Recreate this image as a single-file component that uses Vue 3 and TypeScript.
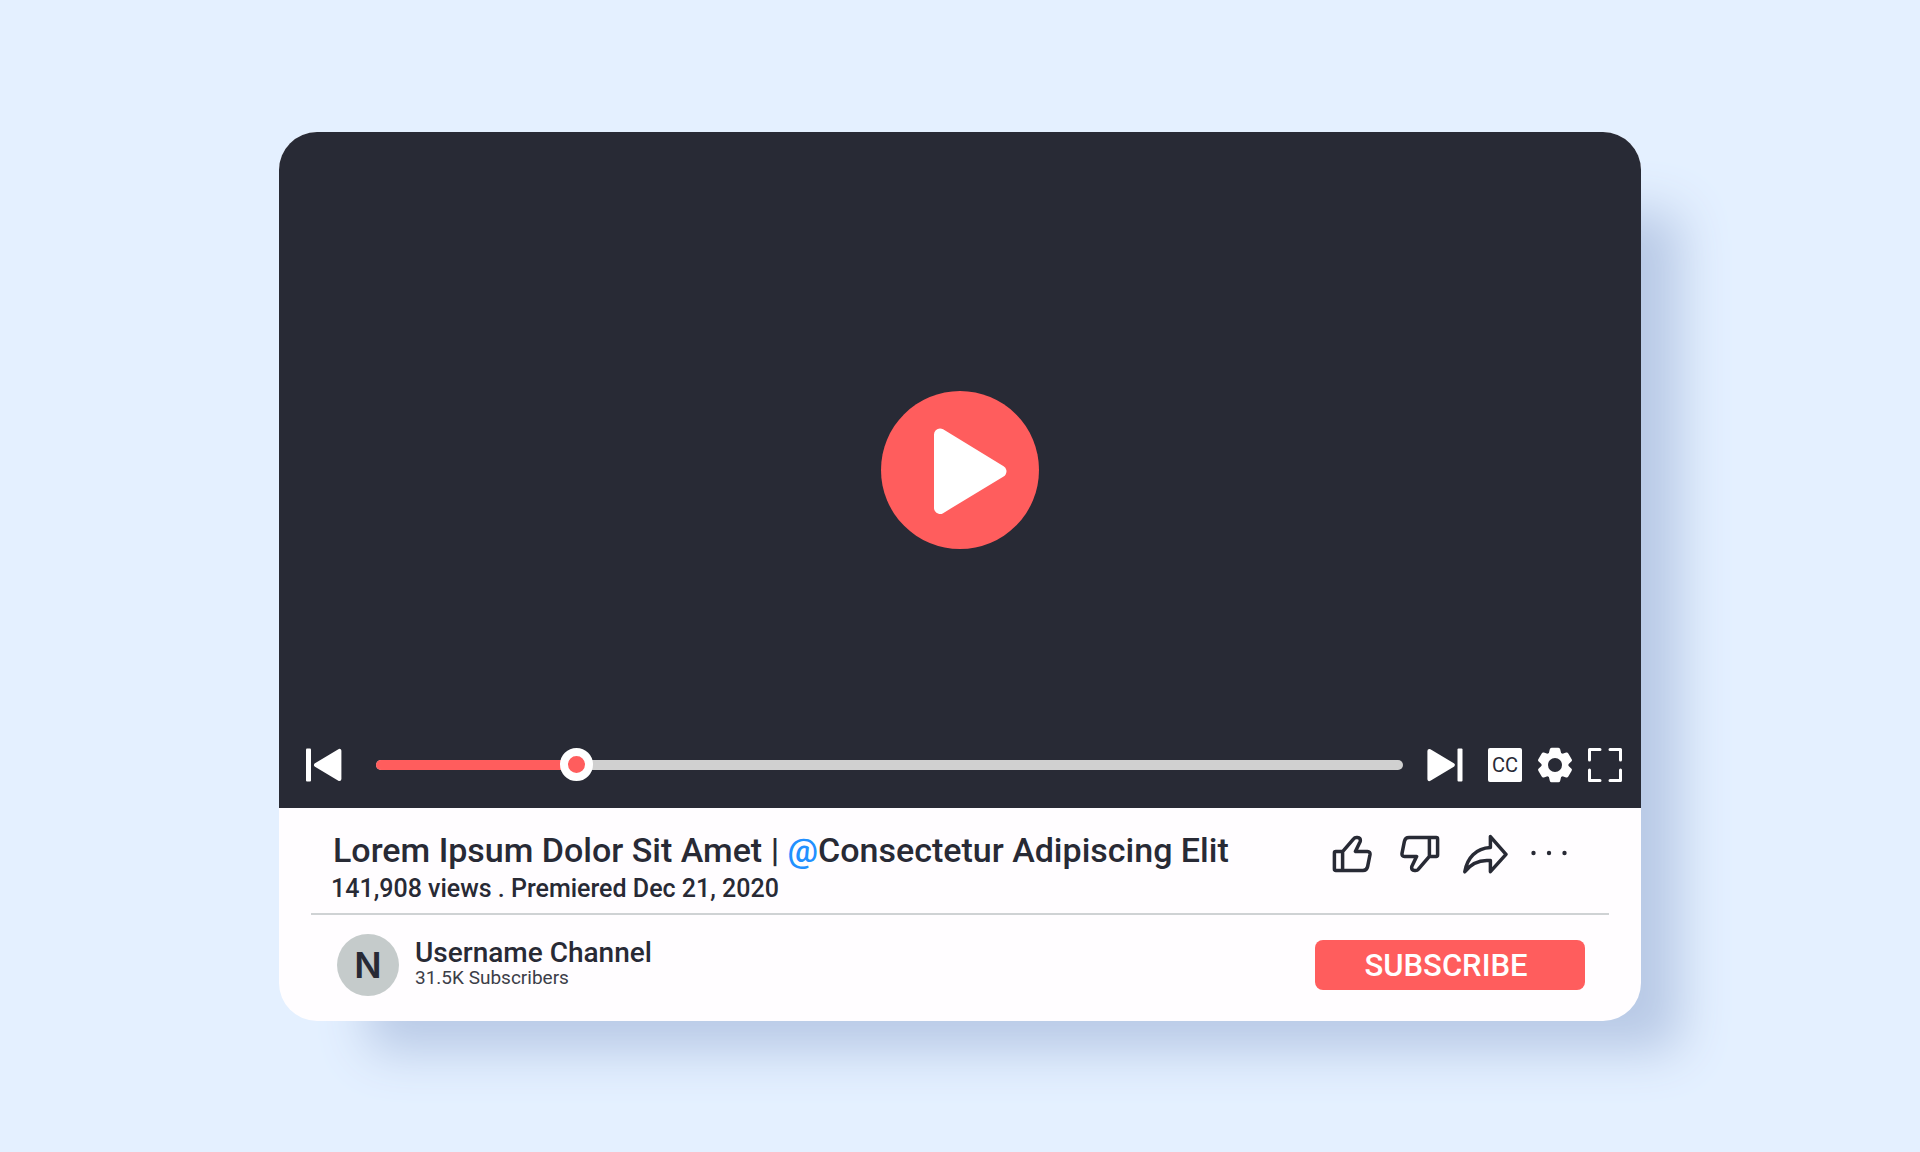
<script setup lang="ts">
import { computed, ref } from 'vue'

const position = ref(185)

// The thumb is 33px wide, so its centre travels the track minus one thumb width.
const fillWidth = computed(() => {
  const ratio = position.value / 1000
  return `calc(16px + (100% - 33px) * ${ratio})`
})

const THUMB_PATH =
  'M10.6 17.6 L21.6 4.8 Q22.6 3.5 24.4 3.5 H25.4 Q29 3.8 28.2 7.4 L23.4 17.4 H35.4 Q38.4 17.6 38 20.6 L35.6 32.6 Q34.8 36.4 31 36.4 H10.6 M3.8 17.6 H10.6 V36.4 H3.8 Q2.4 36.4 2.4 35 V19 Q2.4 17.6 3.8 17.6 Z'
</script>

<template>
  <main class="page">
    <article class="player">
      <section class="video" aria-label="Video">
        <div class="stage">
          <button class="play" type="button" aria-label="Play">
            <svg viewBox="0 0 158 158" width="158" height="158">
              <path class="play-shape" d="M59 43.5 L119.5 80.3 L59 117 Z" />
            </svg>
          </button>
        </div>
        <div class="controls">
          <button class="icon" type="button" aria-label="Previous">
            <svg viewBox="0 0 36 34" width="36" height="34">
              <rect x="0" y="0.5" width="5" height="33" rx="1" fill="#fff" />
              <path class="skip-shape" d="M10 17 L33.4 2.9 V31.1 Z" />
            </svg>
          </button>
          <div class="seek">
            <div class="fill" :style="{ width: fillWidth }"></div>
            <input v-model.number="position" type="range" min="0" max="1000" aria-label="Seek" />
          </div>
          <button class="icon" type="button" aria-label="Next">
            <svg viewBox="0 0 36 34" width="36" height="34">
              <path class="skip-shape" d="M2.4 2.9 L25.8 17 L2.4 31.1 Z" />
              <rect x="30.5" y="0.5" width="5" height="33" rx="1" fill="#fff" />
            </svg>
          </button>
          <div class="options">
            <button class="cc" type="button" aria-label="Captions">CC</button>
            <button class="icon" type="button" aria-label="Settings">
              <svg viewBox="0 0 36 36" width="36" height="36">
                <g fill="#fff">
                  <circle cx="18" cy="18" r="13.4" />
                  <path
                    v-for="angle in [0, 60, 120, 180, 240, 300]"
                    :key="angle"
                    d="M11.8 6.5 L12.8 2.2 Q13.1 0.7 14.6 0.7 H21.4 Q22.9 0.7 23.2 2.2 L24.2 6.5 Z"
                    :transform="`rotate(${angle} 18 18)`"
                  />
                </g>
                <circle cx="18" cy="18" r="7" fill="#282a35" />
              </svg>
            </button>
            <button class="icon" type="button" aria-label="Full screen">
              <svg viewBox="0 0 34 34" width="34" height="34">
                <path
                  class="frame"
                  d="M12 1.5 H1.5 V12 M22 1.5 H32.5 V12 M1.5 22 V32.5 H12 M32.5 22 V32.5 H22"
                />
              </svg>
            </button>
          </div>
        </div>
      </section>

      <section class="details">
        <header class="summary">
          <div class="heading">
            <h1>Lorem Ipsum Dolor Sit Amet | <span class="at">@</span>Consectetur Adipiscing Elit</h1>
            <p class="stats">141,908 views . Premiered Dec 21, 2020</p>
          </div>
          <div class="actions">
            <button class="icon like" type="button" aria-label="Like">
              <svg viewBox="0 0 40 40" width="40" height="40" stroke-width="3.5">
                <path class="line" :d="THUMB_PATH" />
              </svg>
            </button>
            <button class="icon dislike" type="button" aria-label="Dislike">
              <svg viewBox="0 0 40 40" width="40" height="40" stroke-width="3.5">
                <path class="line" :d="THUMB_PATH" transform="rotate(180 20 20)" />
              </svg>
            </button>
            <button class="icon share" type="button" aria-label="Share">
              <svg viewBox="0 0 46 40" width="46" height="40" stroke-width="3.5">
                <path
                  class="line"
                  d="M28.4 2.6 L44 20.3 L28.4 37.6 V26.6 C17 25.4 9 29.6 2.8 37.8 C5 24 14 14 28.4 13.4 Z"
                />
              </svg>
            </button>
            <button class="icon" type="button" aria-label="More">
              <svg viewBox="0 0 36 40" width="36" height="40" fill="#282a35">
                <circle cx="2.5" cy="19" r="2.2" />
                <circle cx="18" cy="19" r="2.2" />
                <circle cx="33.5" cy="19" r="2.2" />
              </svg>
            </button>
          </div>
        </header>

        <footer class="channel">
          <div class="avatar" aria-hidden="true">N</div>
          <div class="who">
            <h2>Username Channel</h2>
            <p class="count">31.5K Subscribers</p>
          </div>
          <button class="subscribe" type="button">SUBSCRIBE</button>
        </footer>
      </section>
    </article>
  </main>
</template>

<style>
body {
  margin: 0;
  background: #e4f0ff;
}
</style>

<style scoped>
.page {
  box-sizing: border-box;
  min-height: 100vh;
  padding: 40px 279px;
  display: flex;
  align-items: center;
  background: #e4f0ff;
  color: #282a35;
  font-family: Roboto, 'Liberation Sans', sans-serif;
}

h1,
h2,
p {
  margin: 0;
  font-weight: 500;
}

button {
  padding: 0;
  border: 0;
  background: none;
  color: inherit;
  font-family: inherit;
  cursor: pointer;
}

svg {
  display: block;
}

.icon {
  flex: none;
}

.player {
  flex: 1;
  min-width: 0;
  border-radius: 38px;
  background: #fffdff;
  box-shadow: 64px 55px 50px -25px #b8c9e6;
}

.video {
  position: relative;
  aspect-ratio: 1362 / 676;
  display: flex;
  flex-direction: column;
  justify-content: flex-end;
  border-radius: 38px 38px 0 0;
  background: #282a35;
}

/* The play button floats over the whole picture area, controls included. */
.stage {
  position: absolute;
  inset: 0;
  display: flex;
  align-items: center;
  justify-content: center;
}

.play {
  border-radius: 50%;
  background: #ff5d5d;
}

.play-shape {
  fill: #fff;
  stroke: #fff;
  stroke-width: 12;
  stroke-linejoin: round;
}

.controls {
  position: relative;
  display: flex;
  align-items: center;
  padding: 0 19px 25px 27px;
}

.skip-shape {
  fill: #fff;
  stroke: #fff;
  stroke-width: 4;
  stroke-linejoin: round;
}

.seek {
  position: relative;
  flex: 1;
  height: 10px;
  margin: 0 24px 0 34px;
  border-radius: 5px;
  background: #d0d0d0;
}

.fill {
  height: 10px;
  border-radius: 5px;
  background: #ff5d5d;
}

.seek input {
  position: absolute;
  inset: -12px 0;
  width: 100%;
  height: 34px;
  margin: 0;
  appearance: none;
  background: transparent;
}

.seek input::-webkit-slider-thumb {
  appearance: none;
  box-sizing: border-box;
  width: 33px;
  height: 33px;
  border: 8px solid #fff;
  border-radius: 50%;
  background: #ff5d5d;
}

.options {
  display: flex;
  align-items: center;
  gap: 15px;
  margin-left: 25px;
}

.cc {
  width: 34px;
  height: 34px;
  border-radius: 2px;
  background: #fff;
  color: #282a35;
  font-size: 20px;
  line-height: 34px;
  text-align: center;
}

.frame {
  fill: none;
  stroke: #fff;
  stroke-width: 3;
  stroke-linecap: round;
  stroke-linejoin: round;
}

.details {
  padding: 0 32px;
}

.summary {
  display: flex;
  justify-content: space-between;
  align-items: flex-start;
  padding: 22px 42px 10px 20px;
  border-bottom: 2px solid #cfd2d4;
}

h1 {
  padding-left: 2px;
  font-size: 34px;
  line-height: 40px;
}

.at {
  color: #2290ff;
}

.stats {
  margin-top: 5px;
  font-size: 25px;
  line-height: 28px;
}

.actions {
  display: flex;
  align-items: center;
  padding-top: 4px;
}

.like {
  margin-right: 28px;
}

.dislike {
  margin-right: 22px;
}

.share {
  margin-right: 23px;
}

.line {
  fill: none;
  stroke: #282a35;
  stroke-linecap: round;
  stroke-linejoin: round;
}

.channel {
  display: flex;
  align-items: center;
  padding: 19px 24px 25px 26px;
}

.avatar {
  flex: none;
  width: 62px;
  height: 62px;
  border-radius: 50%;
  background: #c5cbcb;
  font-family: Inter, Roboto, sans-serif;
  font-size: 36px;
  font-weight: 600;
  line-height: 62px;
  text-align: center;
}

.who {
  flex: 1;
  padding: 0 0 2px 16px;
}

h2 {
  font-size: 28px;
  line-height: 28px;
}

.count {
  color: #3c3e48;
  font-size: 19px;
  font-weight: 400;
  line-height: 22px;
}

.subscribe {
  width: 270px;
  height: 50px;
  padding: 2px 8px 0 0;
  border-radius: 8px;
  background: #ff5d5d;
  color: #fff;
  font-size: 31px;
  font-weight: 500;
}
</style>
